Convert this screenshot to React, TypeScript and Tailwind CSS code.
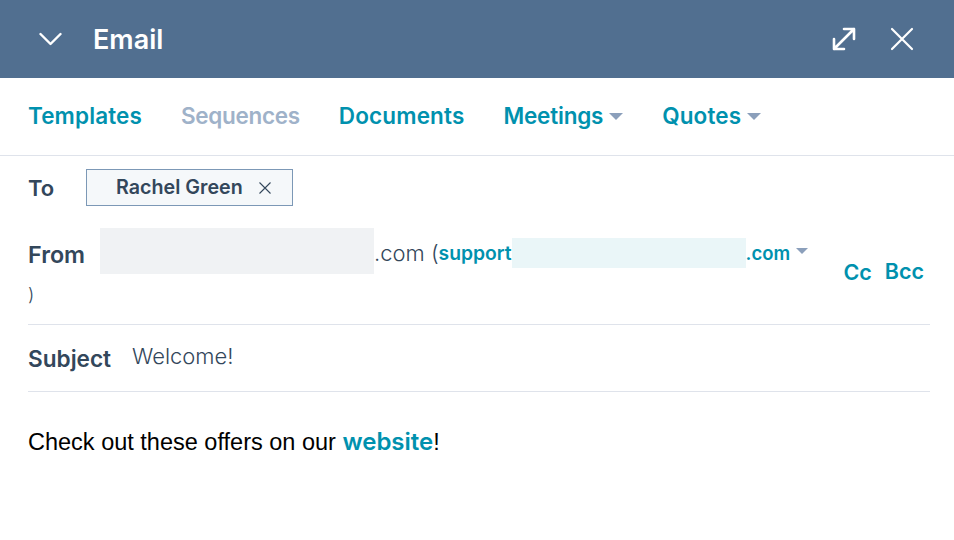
const TEAL = "text-[#0091ae]";

function Caret({ className }: { className: string }) {
  return (
    <svg viewBox="0 0 14 7" className={className} aria-hidden="true">
      <path d="M0 0h14L7 7z" fill="#8b9fbb" />
    </svg>
  );
}

function Tab({ label, caret, muted, tracking }: { label: string; caret?: boolean; muted?: boolean; tracking: string }) {
  return (
    <div className="flex items-center gap-[6px]">
      <span className={`text-[22.5px] font-semibold leading-none ${tracking} ${muted ? "text-[#9fb2c9]" : TEAL}`}>{label}</span>
      {caret && <Caret className="w-[14px] h-[7px]" />}
    </div>
  );
}

export default function App() {
  return (
    <div className="w-[954px] h-[540px] overflow-hidden bg-white font-['Inter',sans-serif] text-[#33475b]">
      {/* Header */}
      <div className="h-[78px] bg-[#516f90] flex items-center justify-between pl-[39px] pr-[40px]">
        <div className="flex items-center gap-[31px]">
          <svg viewBox="0 0 23 14" className="w-[23px] h-[14px]" fill="none" stroke="#fff" strokeWidth="2.4" strokeLinecap="round" strokeLinejoin="round">
            <path d="M1.5 2L11.5 12L21.5 2" />
          </svg>
          <span className="text-[27px] font-semibold text-white leading-none">Email</span>
        </div>
        <div className="flex items-center gap-[34px]">
          <svg viewBox="0 0 24 24" className="w-[24px] h-[24px]" fill="none" stroke="#fff" strokeWidth="2.6" strokeLinecap="round" strokeLinejoin="round">
            <path d="M2 22L22 2M12 2h10v10M2 12v10h10" />
          </svg>
          <svg viewBox="0 0 24 24" className="w-[24px] h-[24px]" fill="none" stroke="#fff" strokeWidth="2.2" strokeLinecap="round">
            <path d="M2 2l20 20M22 2L2 22" />
          </svg>
        </div>
      </div>

      {/* Tabs */}
      <div className="h-[78px] border-b border-[#dfe3eb] flex items-center gap-[39px] pl-[28px]">
        <Tab label="Templates" tracking="tracking-[0.11px]" />
        <Tab label="Sequences" muted tracking="tracking-[-0.3px]" />
        <Tab label="Documents" tracking="tracking-[0.15px]" />
        <Tab label="Meetings" caret tracking="tracking-[-0.2px]" />
        <Tab label="Quotes" caret tracking="tracking-[0.1px]" />
      </div>

      <div className="px-[28px]">
        {/* To */}
        <div className="flex items-center h-[37px] mt-[13px]">
          <span className="w-[58px] text-[22px] font-semibold leading-none">To</span>
          <div className="h-[37px] w-[207px] bg-[#f5f8fa] border border-[#7c98b6] flex items-center pl-[29px] gap-[16px]">
            <span className="text-[19.7px] font-semibold leading-none">Rachel Green</span>
            <svg viewBox="0 0 12 12" className="w-[12px] h-[12px]" fill="none" stroke="#33475b" strokeWidth="1.1">
              <path d="M0.5 0.5l11 11M11.5 0.5l-11 11" />
            </svg>
          </div>
        </div>

        {/* From */}
        <div className="flex items-start h-[97px] mt-[22px] border-b border-[#dfe3eb] w-[902px]">
          <div className="flex-1">
            <div className="flex items-center h-[46px]">
              <span className="w-[72px] text-[23.3px] font-semibold leading-none relative top-[4px]">From</span>
              <span className="w-[274px] h-[46px] bg-[#f0f2f4]" />
              <span className="text-[22px] font-[350] leading-none relative top-[2px]">.com (</span>
              <span className={`text-[19.3px] font-semibold leading-none relative top-[3px] ${TEAL}`}>support</span>
              <span className="w-[234px] h-[30px] bg-[#eaf6f8] relative top-[2px]" />
              <span className={`text-[18.5px] font-semibold leading-none relative top-[2px] ${TEAL}`}>.com</span>
              <Caret className="w-[12px] h-[6px] ml-[6px]" />
            </div>
            <div className="text-[18px] font-[350] leading-none mt-[12px]">)</div>
          </div>
          <div className={`flex gap-[13px] mt-[33px] mr-[6px] text-[21.5px] font-semibold leading-none ${TEAL}`}>
            <span className="relative top-[1px]">Cc</span>
            <span>Bcc</span>
          </div>
        </div>

        {/* Subject */}
        <div className="flex items-center h-[67px] border-b border-[#dfe3eb] w-[902px]">
          <span className="w-[104px] text-[22.6px] font-semibold leading-none relative top-[1px]">Subject</span>
          <span className="text-[22px] font-[350] leading-none relative top-[-2px]">Welcome!</span>
        </div>

        {/* Body */}
        <p className="mt-[35px] font-['Liberation_Sans',sans-serif] text-[23.5px] leading-[30px] text-black">
          Check out these offers on our <span className={`font-['Inter',sans-serif] text-[24px] font-semibold ${TEAL}`}>website</span>!
        </p>
      </div>
    </div>
  );
}
